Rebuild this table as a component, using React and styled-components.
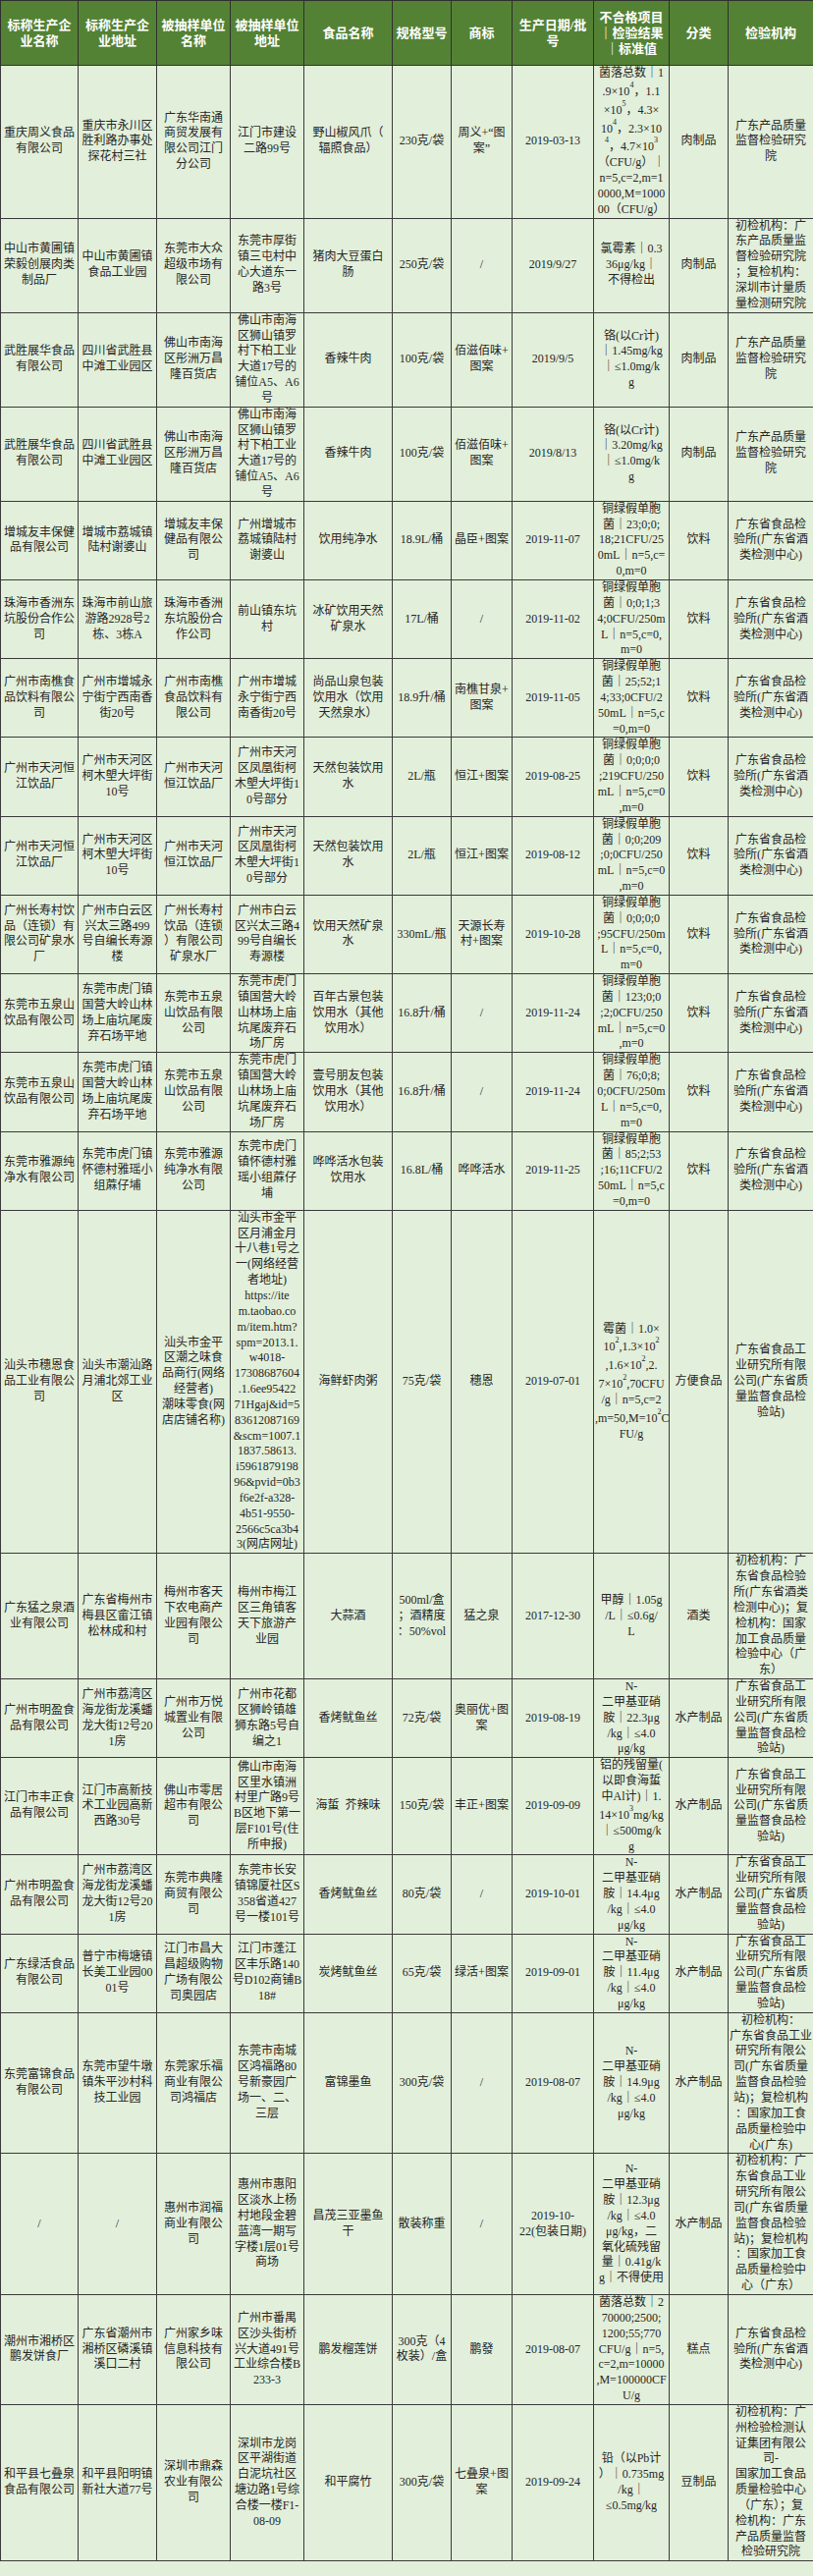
import React from 'react'
import styled, { createGlobalStyle } from 'styled-components'

const GlobalStyle = createGlobalStyle`
  body {
    margin: 0;
    background: #e2efda;
  }
`

const cols = [79, 80, 75, 75, 90, 60, 62, 83, 77, 60, 87]

const heads = [
  '标称生产企\n业名称',
  '标称生产企\n业地址',
  '被抽样单位\n名称',
  '被抽样单位\n地址',
  '食品名称',
  '规格型号',
  '商标',
  '生产日期/批\n号',
  '不合格项目\n｜检验结果\n｜标准值',
  '分类',
  '检验机构',
]

const LAB_SP = '广东产品质量\n监督检验研究\n院'
const LAB_FOOD = '广东省食品检\n验所(广东省酒\n类检测中心)'
const LAB_IND = '广东省食品工\n业研究所有限\n公司(广东省质\n量监督食品检\n验站)'
const LAB_RE = '初检机构：\n广东省食品工业\n研究所有限公\n司(广东省质量\n监督食品检验\n站)；复检机构\n：国家加工食\n品质量检验中\n心(广东)'

const rows = [
  ['重庆周义食品\n有限公司', '重庆市永川区\n胜利路办事处\n探花村三社', '广东华南通\n商贸发展有\n限公司江门\n分公司', '江门市建设\n二路99号', '野山椒风爪（\n辐照食品）', '230克/袋', '周义+“图\n案”', '2019-03-13',
    '菌落总数｜1\n.9×10^4，1.1\n×10^5，4.3×\n10^4，2.3×10\n^4，4.7×10^3\n（CFU/g）｜\nn=5,c=2,m=1\n0000,M=1000\n00（CFU/g）', '肉制品', LAB_SP],
  ['中山市黄圃镇\n荣毅创展肉类\n制品厂', '中山市黄圃镇\n食品工业园', '东莞市大众\n超级市场有\n限公司', '东莞市厚街\n镇三屯村中\n心大道东一\n路3号', '猪肉大豆蛋白\n肠', '250克/袋', '/', '2019/9/27',
    '氯霉素｜0.3\n36μg/kg｜\n不得检出', '肉制品', '初检机构：广\n东产品质量监\n督检验研究院\n；复检机构：\n深圳市计量质\n量检测研究院'],
  ['武胜展华食品\n有限公司', '四川省武胜县\n中滩工业园区', '佛山市南海\n区彤洲万昌\n隆百货店', '佛山市南海\n区狮山镇罗\n村下柏工业\n大道17号的\n铺位A5、A6\n号', '香辣牛肉', '100克/袋', '佰滋佰味+\n图案', '2019/9/5',
    '铬(以Cr计)\n｜1.45mg/kg\n｜≤1.0mg/k\ng', '肉制品', LAB_SP],
  ['武胜展华食品\n有限公司', '四川省武胜县\n中滩工业园区', '佛山市南海\n区彤洲万昌\n隆百货店', '佛山市南海\n区狮山镇罗\n村下柏工业\n大道17号的\n铺位A5、A6\n号', '香辣牛肉', '100克/袋', '佰滋佰味+\n图案', '2019/8/13',
    '铬(以Cr计)\n｜3.20mg/kg\n｜≤1.0mg/k\ng', '肉制品', LAB_SP],
  ['增城友丰保健\n品有限公司', '增城市荔城镇\n陆村谢婆山', '增城友丰保\n健品有限公\n司', '广州增城市\n荔城镇陆村\n谢婆山', '饮用纯净水', '18.9L/桶', '晶臣+图案', '2019-11-07',
    '铜绿假单胞\n菌｜23;0;0;\n18;21CFU/25\n0mL｜n=5,c=\n0,m=0', '饮料', LAB_FOOD],
  ['珠海市香洲东\n坑股份合作公\n司', '珠海市前山旅\n游路2928号2\n栋、3栋A', '珠海市香洲\n东坑股份合\n作公司', '前山镇东坑\n村', '冰矿饮用天然\n矿泉水', '17L/桶', '/', '2019-11-02',
    '铜绿假单胞\n菌｜0;0;1;3\n4;0CFU/250m\nL｜n=5,c=0,\nm=0', '饮料', LAB_FOOD],
  ['广州市南樵食\n品饮料有限公\n司', '广州市增城永\n宁街宁西南香\n街20号', '广州市南樵\n食品饮料有\n限公司', '广州市增城\n永宁街宁西\n南香街20号', '尚品山泉包装\n饮用水（饮用\n天然泉水）', '18.9升/桶', '南樵甘泉+\n图案', '2019-11-05',
    '铜绿假单胞\n菌｜25;52;1\n4;33;0CFU/2\n50mL｜n=5,c\n=0,m=0', '饮料', LAB_FOOD],
  ['广州市天河恒\n江饮品厂', '广州市天河区\n柯木塱大坪街\n10号', '广州市天河\n恒江饮品厂', '广州市天河\n区凤凰街柯\n木塱大坪街1\n0号部分', '天然包装饮用\n水', '2L/瓶', '恒江+图案', '2019-08-25',
    '铜绿假单胞\n菌｜0;0;0;0\n;219CFU/250\nmL｜n=5,c=0\n,m=0', '饮料', LAB_FOOD],
  ['广州市天河恒\n江饮品厂', '广州市天河区\n柯木塱大坪街\n10号', '广州市天河\n恒江饮品厂', '广州市天河\n区凤凰街柯\n木塱大坪街1\n0号部分', '天然包装饮用\n水', '2L/瓶', '恒江+图案', '2019-08-12',
    '铜绿假单胞\n菌｜0;0;209\n;0;0CFU/250\nmL｜n=5,c=0\n,m=0', '饮料', LAB_FOOD],
  ['广州长寿村饮\n品（连锁）有\n限公司矿泉水\n厂', '广州市白云区\n兴太三路499\n号自编长寿源\n楼', '广州长寿村\n饮品（连锁\n）有限公司\n矿泉水厂', '广州市白云\n区兴太三路4\n99号自编长\n寿源楼', '饮用天然矿泉\n水', '330mL/瓶', '天源长寿\n村+图案', '2019-10-28',
    '铜绿假单胞\n菌｜0;0;0;0\n;95CFU/250m\nL｜n=5,c=0,\nm=0', '饮料', LAB_FOOD],
  ['东莞市五泉山\n饮品有限公司', '东莞市虎门镇\n国营大岭山林\n场上庙坑尾废\n弃石场平地', '东莞市五泉\n山饮品有限\n公司', '东莞市虎门\n镇国营大岭\n山林场上庙\n坑尾废弃石\n场厂房', '百年古景包装\n饮用水（其他\n饮用水）', '16.8升/桶', '/', '2019-11-24',
    '铜绿假单胞\n菌｜123;0;0\n;2;0CFU/250\nmL｜n=5,c=0\n,m=0', '饮料', LAB_FOOD],
  ['东莞市五泉山\n饮品有限公司', '东莞市虎门镇\n国营大岭山林\n场上庙坑尾废\n弃石场平地', '东莞市五泉\n山饮品有限\n公司', '东莞市虎门\n镇国营大岭\n山林场上庙\n坑尾废弃石\n场厂房', '壹号朋友包装\n饮用水（其他\n饮用水）', '16.8升/桶', '/', '2019-11-24',
    '铜绿假单胞\n菌｜76;0;8;\n0;0CFU/250m\nL｜n=5,c=0,\nm=0', '饮料', LAB_FOOD],
  ['东莞市雅源纯\n净水有限公司', '东莞市虎门镇\n怀德村雅瑶小\n组蔴仔埔', '东莞市雅源\n纯净水有限\n公司', '东莞市虎门\n镇怀德村雅\n瑶小组蔴仔\n埔', '哗哗活水包装\n饮用水', '16.8L/桶', '哗哗活水', '2019-11-25',
    '铜绿假单胞\n菌｜85;2;53\n;16;11CFU/2\n50mL｜n=5,c\n=0,m=0', '饮料', LAB_FOOD],
  ['汕头市穗恩食\n品工业有限公\n司', '汕头市潮汕路\n月浦北郊工业\n区', '汕头市金平\n区潮之味食\n品商行(网络\n经营者)\n潮味零食(网\n店店铺名称)',
    '汕头市金平\n区月浦金月\n十八巷1号之\n一(网络经营\n者地址)\nhttps://ite\nm.taobao.co\nm/item.htm?\nspm=2013.1.\nw4018-\n17308687604\n.1.6ee95422\n71Hgaj&id=5\n83612087169\n&scm=1007.1\n1837.58613.\ni5961879198\n96&pvid=0b3\nf6e2f-a328-\n4b51-9550-\n2566c5ca3b4\n3(网店网址)',
    '海鲜虾肉粥', '75克/袋', '穗恩', '2019-07-01',
    '霉菌｜1.0×\n10^2,1.3×10^2\n,1.6×10^2,2.\n7×10^2,70CFU\n/g｜n=5,c=2\n,m=50,M=10^2C\nFU/g', '方便食品', LAB_IND],
  ['广东猛之泉酒\n业有限公司', '广东省梅州市\n梅县区畲江镇\n松林成和村', '梅州市客天\n下农电商产\n业园有限公\n司', '梅州市梅江\n区三角镇客\n天下旅游产\n业园', '大蒜酒', '500ml/盒\n；酒精度\n：50%vol', '猛之泉', '2017-12-30',
    '甲醇｜1.05g\n/L｜≤0.6g/\nL', '酒类', '初检机构：广\n东省食品检验\n所(广东省酒类\n检测中心)；复\n检机构：国家\n加工食品质量\n检验中心（广\n东）'],
  ['广州市明盈食\n品有限公司', '广州市荔湾区\n海龙街龙溪蟠\n龙大街12号20\n1房', '广州市万悦\n城置业有限\n公司', '广州市花都\n区狮岭镇雄\n狮东路5号自\n编之1', '香烤鱿鱼丝', '72克/袋', '奥丽优+图\n案', '2019-08-19',
    'N-\n二甲基亚硝\n胺｜22.3μg\n/kg｜≤4.0\nμg/kg', '水产制品', LAB_IND],
  ['江门市丰正食\n品有限公司', '江门市高新技\n术工业园高新\n西路30号', '佛山市零居\n超市有限公\n司', '佛山市南海\n区里水镇洲\n村里广路9号\nB区地下第一\n层F101号(住\n所申报)', '海蜇  芥辣味', '150克/袋', '丰正+图案', '2019-09-09',
    '铝的残留量(\n以即食海蜇\n中Al计)｜1.\n14×10^3mg/kg\n｜≤500mg/k\ng', '水产制品', LAB_IND],
  ['广州市明盈食\n品有限公司', '广州市荔湾区\n海龙街龙溪蟠\n龙大街12号20\n1房', '东莞市典隆\n商贸有限公\n司', '东莞市长安\n镇锦厦社区S\n358省道427\n号一楼101号', '香烤鱿鱼丝', '80克/袋', '/', '2019-10-01',
    'N-\n二甲基亚硝\n胺｜14.4μg\n/kg｜≤4.0\nμg/kg', '水产制品', LAB_IND],
  ['广东绿活食品\n有限公司', '普宁市梅塘镇\n长美工业园00\n01号', '江门市昌大\n昌超级购物\n广场有限公\n司奥园店', '江门市蓬江\n区丰乐路140\n号D102商铺B\n18#', '炭烤鱿鱼丝', '65克/袋', '绿活+图案', '2019-09-01',
    'N-\n二甲基亚硝\n胺｜11.4μg\n/kg｜≤4.0\nμg/kg', '水产制品', LAB_IND],
  ['东莞富锦食品\n有限公司', '东莞市望牛墩\n镇朱平沙村科\n技工业园', '东莞家乐福\n商业有限公\n司鸿福店', '东莞市南城\n区鸿福路80\n号新豪园广\n场一、二、\n三层', '富锦墨鱼', '300克/袋', '/', '2019-08-07',
    'N-\n二甲基亚硝\n胺｜14.9μg\n/kg｜≤4.0\nμg/kg', '水产制品', LAB_RE],
  ['/', '/', '惠州市润福\n商业有限公\n司', '惠州市惠阳\n区淡水上杨\n村地段金碧\n蓝湾一期写\n字楼1层01号\n商场', '昌茂三亚墨鱼\n干', '散装称重', '/', '2019-10-\n22(包装日期)',
    'N-\n二甲基亚硝\n胺｜12.3μg\n/kg｜≤4.0\nμg/kg，二\n氧化硫残留\n量｜0.41g/k\ng｜不得使用', '水产制品', '初检机构：广\n东省食品工业\n研究所有限公\n司(广东省质量\n监督食品检验\n站)；复检机构\n：国家加工食\n品质量检验中\n心（广东）'],
  ['潮州市湘桥区\n鹏发饼食厂', '广东省潮州市\n湘桥区磷溪镇\n溪口二村', '广州家乡味\n信息科技有\n限公司', '广州市番禺\n区沙头街桥\n兴大道491号\n工业综合楼B\n233-3', '鹏发榴莲饼', '300克（4\n枚装）/盒', '鹏發', '2019-08-07',
    '菌落总数｜2\n70000;2500;\n1200;55;770\nCFU/g｜n=5,\nc=2,m=10000\n,M=100000CF\nU/g', '糕点', LAB_FOOD],
  ['和平县七叠泉\n食品有限公司', '和平县阳明镇\n新社大道77号', '深圳市鼎森\n农业有限公\n司', '深圳市龙岗\n区平湖街道\n白泥坑社区\n塘边路1号综\n合楼一楼F1-\n08-09', '和平腐竹', '300克/袋', '七叠泉+图\n案', '2019-09-24',
    '铅（以Pb计\n）｜0.735mg\n/kg｜\n≤0.5mg/kg', '豆制品', '初检机构：广\n州检验检测认\n证集团有限公\n司-\n国家加工食品\n质量检验中心\n（广东）；复\n检机构：广东\n产品质量监督\n检验研究院'],
]

const Sheet = styled.table`
  width: 828px;
  border-collapse: collapse;
  table-layout: fixed;
  background: #e2efda;
  font-family: "Liberation Serif", "Noto Sans CJK SC", serif;
`

const HeadRow = styled.tr`
  height: 66px;
  background: #548235;
`

const HeadCell = styled.th`
  border: 1px solid #2f2f2f;
  padding: 0 1px;
  color: #ffffff;
  font-size: 13px;
  font-weight: 700;
  line-height: 16px;
  text-align: center;
  vertical-align: middle;
  white-space: pre;
`

const Cell = styled.td`
  border: 1px solid #3a3a3a;
  padding: 0 1px;
  color: #262626;
  font-size: 12px;
  line-height: 15.85px;
  text-align: center;
  vertical-align: middle;
  white-space: pre;
`

// raised a little above the strut so a line with an exponent grows a few px, as in the sheet
const Sup = styled.sup`
  display: inline-block;
  font-size: 8px;
  line-height: 8px;
  vertical-align: 8px;
`

const withSup = (s) =>
  s.split(/\^(\d)/).map((part, i) => (i % 2 ? <Sup key={i}>{part}</Sup> : part))

export default function App() {
  return (
    <>
      <GlobalStyle />
      <Sheet>
        <colgroup>
          {cols.map((w, i) => (
            <col key={i} style={{ width: w }} />
          ))}
        </colgroup>
        <thead>
          <HeadRow>
            {heads.map((h, i) => (
              <HeadCell key={i}>{h}</HeadCell>
            ))}
          </HeadRow>
        </thead>
        <tbody>
          {rows.map((r, ri) => (
            <tr key={ri}>
              {r.map((c, ci) => (
                <Cell key={ci}>{withSup(c)}</Cell>
              ))}
            </tr>
          ))}
        </tbody>
      </Sheet>
    </>
  )
}
